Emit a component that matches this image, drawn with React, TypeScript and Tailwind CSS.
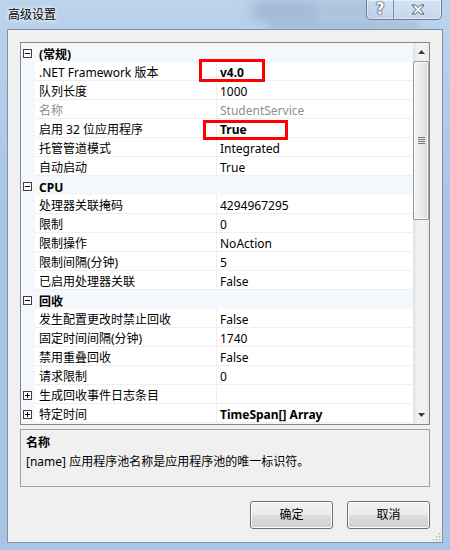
import React from "react";

type R = {
  cat?: boolean;
  label: string;
  value?: string;
  bold?: boolean;
  gray?: boolean;
  plus?: boolean;
};

const rows: R[] = [
  { cat: true, label: "(常规)" },
  { label: ".NET Framework 版本", value: "v4.0", bold: true },
  { label: "队列长度", value: "1000" },
  { label: "名称", value: "StudentService", gray: true },
  { label: "启用 32 位应用程序", value: "True", bold: true },
  { label: "托管管道模式", value: "Integrated" },
  { label: "自动启动", value: "True" },
  { cat: true, label: "CPU" },
  { label: "处理器关联掩码", value: "4294967295" },
  { label: "限制", value: "0" },
  { label: "限制操作", value: "NoAction" },
  { label: "限制间隔(分钟)", value: "5" },
  { label: "已启用处理器关联", value: "False" },
  { cat: true, label: "回收" },
  { label: "发生配置更改时禁止回收", value: "False" },
  { label: "固定时间间隔(分钟)", value: "1740" },
  { label: "禁用重叠回收", value: "False" },
  { label: "请求限制", value: "0" },
  { label: "生成回收事件日志条目", value: "", plus: true },
  { label: "特定时间", value: "TimeSpan[] Array", bold: true, plus: true },
];

function ExpBox({ plus }: { plus?: boolean }) {
  return (
    <svg width="9" height="9" viewBox="0 0 9 9" className="block">
      <rect x="0.5" y="0.5" width="8" height="8" fill="#fff" stroke="#404040" />
      <line x1="2" y1="4.5" x2="7" y2="4.5" stroke="#000" />
      {plus && <line x1="4.5" y1="2" x2="4.5" y2="7" stroke="#000" />}
    </svg>
  );
}

function Row({ r }: { r: R }) {
  if (r.cat) {
    return (
      <div className="flex h-[19px] bg-[#f4f7fc]">
        <div className="w-[14px] flex items-center pl-[2px] pt-[1px]">
          <ExpBox />
        </div>
        <div className="pl-[4px] pt-[4px] flex items-center font-bold text-black leading-none">{r.label}</div>
      </div>
    );
  }
  return (
    <div className="flex h-[19px]">
      <div className="w-[14px] shrink-0 bg-[#f4f7fc] flex items-center pl-[2px] pt-[1px]">
        {r.plus && <ExpBox plus />}
      </div>
      <div
        className={`w-[182px] shrink-0 bg-white border-r border-b border-[#efefef] pl-[4px] pt-[4px] flex items-center leading-none whitespace-nowrap ${
          r.gray ? "text-[#8e8e8e]" : "text-black"
        }`}
      >
        {r.label}
      </div>
      <div
        className={`flex-1 bg-white border-b border-[#efefef] pl-[3px] pt-[4px] flex items-center leading-none whitespace-nowrap ${
          r.gray ? "text-[#8e8e8e]" : "text-black"
        } ${r.bold ? "font-bold" : ""}`}
      >
        {r.value}
      </div>
    </div>
  );
}

function Arrow({ down }: { down?: boolean }) {
  return (
    <svg width="7" height="4" viewBox="0 0 7 4" className="block">
      {down ? (
        <polygon points="0,0 7,0 3.5,4" fill="#3c3c3c" />
      ) : (
        <polygon points="0,4 7,4 3.5,0" fill="#3c3c3c" />
      )}
    </svg>
  );
}

function Btn({ label }: { label: string }) {
  return (
    <div className="w-[83px] h-[28px] rounded-[3px] border border-[#707070] bg-[linear-gradient(to_bottom,#f2f2f2_0%,#ebebeb_50%,#dddddd_50%,#cfcfcf_100%)] shadow-[inset_0_0_0_1px_#fcfcfc] flex items-center justify-center text-black text-[12px] leading-none">
      {label}
    </div>
  );
}

export default function App() {
  return (
    <div className="w-[450px] h-[550px] relative overflow-hidden flex flex-col bg-[linear-gradient(to_bottom,#bcd3ec,#a8c4e5_40%,#a9c4e4)] font-['Noto_Sans','Noto_Sans_CJK_SC',sans-serif] text-[12px]">
      {/* glass blur blobs */}
      <div className="absolute left-[250px] top-[0px] w-[70px] h-[22px] rounded-full bg-[#7f97b4] opacity-40 blur-[6px]" />
      <div className="absolute left-[320px] top-[2px] w-[60px] h-[16px] rounded-full bg-[#8ea4bf] opacity-40 blur-[6px]" />
      <div className="absolute left-[270px] top-[22px] w-[150px] h-[8px] rounded-full bg-[#8098b6] opacity-40 blur-[4px]" />

      {/* title bar */}
      <div className="h-[29px] shrink-0 flex items-start relative">
        <div className="pl-[8px] pt-[6px] text-black text-[12px] leading-[18px] [text-shadow:0_0_6px_#fff,0_0_3px_#fff]">
          高级设置
        </div>
        <div className="ml-auto mr-[8px] flex h-[20px] rounded-b-[5px] border border-t-0 border-[#6d7e96] overflow-hidden bg-[linear-gradient(to_bottom,rgba(255,255,255,0.35),rgba(255,255,255,0.15))] shadow-[inset_0_0_0_1px_rgba(255,255,255,0.45)]">
          <div className="w-[27px] h-full flex items-center justify-center border-r border-[#7f90a8]">
            <span className="font-['DejaVu_Sans',sans-serif] font-bold text-[15px] leading-none text-white [text-shadow:0_0_1px_#33445c,0_0_1px_#33445c,0_0_2px_#33445c]">?</span>
          </div>
          <div className="w-[47px] h-full flex items-center justify-center">
            <svg width="14" height="11" viewBox="0 0 14 11">
              <path
                d="M1 1 L4.5 1 L7 3.6 L9.5 1 L13 1 L9 5.5 L13 10 L9.5 10 L7 7.4 L4.5 10 L1 10 L5 5.5 Z"
                fill="#fff"
                stroke="#3a4b63"
                strokeWidth="0.9"
                strokeLinejoin="round"
              />
            </svg>
          </div>
        </div>
      </div>

      {/* client area */}
      <div className="relative flex-1 mx-[7px] mb-[7px] border border-[#7e91aa] bg-[#f0f0f0] flex flex-col pt-[12px] px-[12px] pb-[13px]">
        {/* property grid */}
        <div className="h-[383px] border border-[#828790] bg-[#f4f7fc] flex">
          <div className="relative flex-1 flex flex-col">
            {rows.map((r, i) => (
              <Row key={i} r={r} />
            ))}
            <div className="absolute left-[178px] top-[16px] w-[66px] h-[23px] border-[3px] border-[#ff0000]" />
            <div className="absolute left-[182px] top-[77px] w-[85px] h-[20px] border-[3px] border-[#ff0000]" />
          </div>
          {/* scrollbar */}
          <div className="w-[16px] shrink-0 flex flex-col bg-[linear-gradient(to_right,#e3e3e3,#f1f1f1_30%,#f1f1f1_70%,#e8e8e8)]">
            <div className="h-[18px] flex items-center justify-center">
              <Arrow />
            </div>
            <div className="h-[159px] rounded-[2px] border border-[#979797] bg-[linear-gradient(to_right,#f5f5f5,#ececec_50%,#d9d9d9)] shadow-[inset_0_0_0_1px_#fbfbfb] flex items-center justify-center">
              <div className="flex flex-col gap-[1px]">
                <div className="w-[7px] h-[1px] bg-[#7a7a7a]" />
                <div className="w-[7px] h-[1px] bg-[#7a7a7a]" />
                <div className="w-[7px] h-[1px] bg-[#7a7a7a]" />
                <div className="w-[7px] h-[1px] bg-[#7a7a7a]" />
              </div>
            </div>
            <div className="flex-1" />
            <div className="h-[18px] flex items-center justify-center">
              <Arrow down />
            </div>
          </div>
        </div>

        {/* description */}
        <div className="mt-[4px] h-[58px] border border-[#a0a0a0] bg-[#f0f0f0] pl-[5px] pt-[3px] text-black leading-[20px]">
          <div className="font-bold leading-[19px]">名称</div>
          <div className="leading-[20px]">[name] 应用程序池名称是应用程序池的唯一标识符。</div>
        </div>

        {/* buttons */}
        <div className="mt-[14px] flex justify-end gap-[14px]">
          <Btn label="确定" />
          <Btn label="取消" />
        </div>

        {/* resize grip */}
        <svg className="absolute right-[1px] bottom-[1px]" width="10" height="10" viewBox="0 0 10 10">
          <g fill="#b8b8b8">
            <rect x="8" y="2" width="1.5" height="1.5" />
            <rect x="5" y="5" width="1.5" height="1.5" />
            <rect x="8" y="5" width="1.5" height="1.5" />
            <rect x="2" y="8" width="1.5" height="1.5" />
            <rect x="5" y="8" width="1.5" height="1.5" />
            <rect x="8" y="8" width="1.5" height="1.5" />
          </g>
        </svg>
      </div>
    </div>
  );
}
